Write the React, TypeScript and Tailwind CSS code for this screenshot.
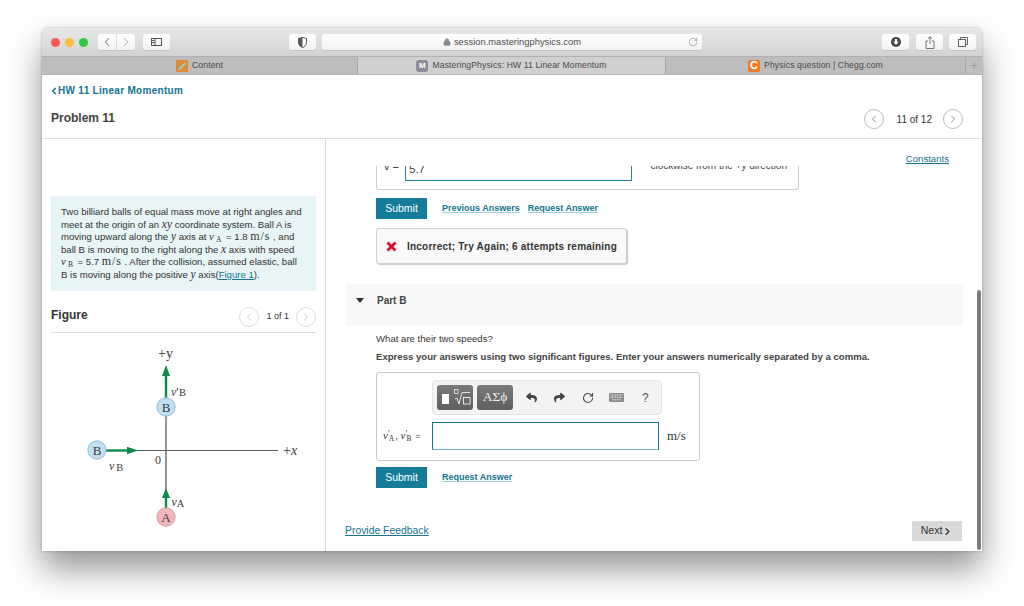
import { ChevronLeft, ChevronRight, Lock, RotateCw } from "lucide-react";
import { FaReply, FaShare } from "react-icons/fa";

const sans = "font-['Liberation_Sans',Arial,sans-serif]";
const serif = "font-['Liberation_Serif','Times_New_Roman',serif]";

function ToolBtn({ children, className }: { children: React.ReactNode; className: string }) {
  return (
    <div className={`h-[16px] flex items-center justify-center rounded-[3px] bg-gradient-to-b from-white to-[#f3f3f3] shadow-[0_1px_0_#c4c4c4] ${className}`}>
      {children}
    </div>
  );
}

function Tab({ className, icon, label }: { className: string; icon?: React.ReactNode; label: string }) {
  return (
    <div className={`h-full flex items-center justify-center gap-[4px] text-[8.6px] tracking-[0.12px] text-[#4a4a4a] border-r border-[#a9a9a9] ${className}`}>
      {icon}
      <span>{label}</span>
    </div>
  );
}

function Round({ dir, faint }: { dir: "l" | "r"; faint?: boolean }) {
  const I = dir === "l" ? ChevronLeft : ChevronRight;
  return (
    <div className={`w-[20px] h-[20px] rounded-full border flex items-center justify-center ${faint ? "border-[#dddddd] text-[#b5b5b5]" : "border-[#bdbdbd] text-[#555555]"}`}>
      <I size={12} strokeWidth={1.3} />
    </div>
  );
}

function V({ sub, prime }: { sub: string; prime?: boolean }) {
  return (
    <span className={`${serif} whitespace-nowrap leading-[0]`}>
      <i className="text-[11px] leading-[0]">v</i>
      {prime ? <span className="text-[9px] align-[3px] leading-[0]">′</span> : null}
      <span className={`text-[7.5px] align-[-2px] leading-[0] ${prime ? "-ml-[1px] mr-[1px]" : "ml-[2px] mr-[2px]"}`}>{sub}</span>
    </span>
  );
}

function Ms() {
  return <span className={`${serif} text-[12px] tracking-[0.9px] leading-[0]`}>m/s</span>;
}

function Figure() {
  const serifFont = "'Liberation Serif', serif";
  return (
    <svg viewBox="51 340 265 210" className="w-[265px] h-[210px] block mt-[7px]" fontFamily={serifFont} fill="#3a3a3a">
      <line x1="166" y1="371" x2="166" y2="510" stroke="#6a6a6a" strokeWidth="1.4" />
      <line x1="96" y1="450.5" x2="278" y2="450.5" stroke="#5f5f5f" strokeWidth="1" />
      <line x1="166" y1="372" x2="166" y2="398" stroke="#0f8a4c" strokeWidth="2.4" />
      <polygon points="166,365 170,376 162,376" fill="#0f8a4c" />
      <line x1="166" y1="494" x2="166" y2="508" stroke="#0f8a4c" strokeWidth="2.4" />
      <polygon points="166,488 170,498 162,498" fill="#0f8a4c" />
      <line x1="104" y1="450.5" x2="130" y2="450.5" stroke="#0f8a4c" strokeWidth="2.4" />
      <polygon points="138,450.5 127,446.8 127,454.2" fill="#0f8a4c" />
      <circle cx="166" cy="407" r="9.2" fill="#bfe0f3" stroke="#8fb4c8" strokeWidth="0.8" />
      <circle cx="97" cy="450" r="9.2" fill="#bfe0f3" stroke="#8fb4c8" strokeWidth="0.8" />
      <circle cx="166" cy="517" r="9.2" fill="#f4b6bd" stroke="#c9969c" strokeWidth="0.8" />
      <text x="166" y="411.5" fontSize="13" textAnchor="middle">B</text>
      <text x="97" y="454.5" fontSize="13" textAnchor="middle">B</text>
      <text x="166" y="521.5" fontSize="13" textAnchor="middle">A</text>
      <text x="165.5" y="358" fontSize="14" textAnchor="middle">+y</text>
      <text x="283" y="454.5" fontSize="14">+<tspan fontStyle="italic">x</tspan></text>
      <text x="155" y="464" fontSize="12">0</text>
      <text x="171" y="396" fontSize="12"><tspan fontStyle="italic">v</tspan>′<tspan fontSize="10.5">B</tspan></text>
      <text x="109" y="470" fontSize="12"><tspan fontStyle="italic">v</tspan><tspan fontSize="10.5" dx="2" dy="1">B</tspan></text>
      <text x="171.5" y="506" fontSize="12"><tspan fontStyle="italic">v</tspan><tspan fontSize="10.5" dy="1">A</tspan></text>
    </svg>
  );
}

export default function App() {
  return (
    <div className={`${sans} w-[1024px] h-[606px] bg-white overflow-hidden pt-[28px] pl-[42px]`}>
      <div className="w-[940px] h-[523px] flex flex-col rounded-t-[5px] overflow-hidden bg-white shadow-[0_18px_34px_rgba(0,0,0,0.42),0_0_3px_rgba(0,0,0,0.25)]">
        {/* toolbar */}
        <div className="h-[28px] shrink-0 flex items-center bg-gradient-to-b from-[#e8e8e8] to-[#d3d3d3] pl-[9px] pr-[6px]">
          <div className="flex gap-[5px] items-center">
            <span className="w-[9px] h-[9px] rounded-full bg-[#fc5753]" />
            <span className="w-[9px] h-[9px] rounded-full bg-[#fdbc40]" />
            <span className="w-[9px] h-[9px] rounded-full bg-[#33c748]" />
          </div>
          <div className="flex ml-[10px] gap-px">
            <ToolBtn className="w-[18px] rounded-r-none"><ChevronLeft size={14} strokeWidth={1.5} className="text-[#555555]" /></ToolBtn>
            <ToolBtn className="w-[18px] rounded-l-none"><ChevronRight size={14} strokeWidth={1.5} className="text-[#9a9a9a]" /></ToolBtn>
          </div>
          <ToolBtn className="w-[27px] ml-[8px]">
            <svg width="12" height="10" viewBox="0 0 12 10" fill="none" stroke="#555555"><rect x="0.5" y="1.5" width="10" height="7" /><line x1="4" y1="1.5" x2="4" y2="8.5" /><line x1="1" y1="3.5" x2="3.5" y2="3.5" /><line x1="1" y1="5.5" x2="3.5" y2="5.5" /></svg>
          </ToolBtn>
          <ToolBtn className="w-[27px] ml-[119px]">
            <svg width="9" height="11" viewBox="0 0 9 11"><path d="M4.5 0.5 L8.5 1.5 V5.5 C8.5 8 6.5 9.8 4.5 10.5 C2.5 9.8 0.5 8 0.5 5.5 V1.5 Z" fill="#fff" stroke="#555555" /><path d="M4.5 0.5 L0.5 1.5 V5.5 C0.5 8 2.5 9.8 4.5 10.5 Z" fill="#555555" /></svg>
          </ToolBtn>
          <ToolBtn className="w-[380px] ml-[6px] relative">
            <span className="flex items-center gap-[3px] text-[9.4px] text-[#4e4e4e]">
              <Lock size={8} fill="#8a8a8a" stroke="#8a8a8a" />
              session.masteringphysics.com
            </span>
            <RotateCw size={10} strokeWidth={1} className="absolute right-[4px] top-[3px] text-[#555555]" />
          </ToolBtn>
          <ToolBtn className="w-[27px] ml-auto">
            <svg width="10" height="10" viewBox="0 0 10 10"><circle cx="5" cy="5" r="5" fill="#444444" /><path d="M3.9 2 H6.1 V4.8 H7.8 L5 7.9 L2.2 4.8 H3.9 Z" fill="#fff" /></svg>
          </ToolBtn>
          <ToolBtn className="w-[27px] ml-[7px]">
            <svg width="10" height="13" viewBox="0 0 10 13" fill="none" stroke="#555555" strokeWidth="0.8"><path d="M3 5 H1 V12.5 H9 V5 H7" /><path d="M5 0.8 V8" /><path d="M3 2.8 L5 0.8 L7 2.8" /></svg>
          </ToolBtn>
          <ToolBtn className="w-[27px] ml-[6px]">
            <svg width="10" height="10" viewBox="0 0 10 10" fill="none" stroke="#555555" strokeWidth="0.9"><rect x="0.5" y="2.5" width="7" height="7" /><path d="M2.5 2.5 V0.5 H9.5 V7.5 H7.5" /></svg>
          </ToolBtn>
        </div>
        {/* tabs */}
        <div className="h-[19px] shrink-0 flex border-y border-[#b0b0b0] bg-[#bebebe]">
          <Tab
            className="w-[316px] bg-[#bdbdbd]"
            icon={
              <svg width="12" height="12" viewBox="0 0 12 12"><rect width="12" height="12" fill="#e08a35" /><path d="M3 9.5 L9.5 3" stroke="#8fd0d8" strokeWidth="2.2" /></svg>
            }
            label="Content"
          />
          <Tab
            className="w-[308px] bg-[#d0d0d0]"
            icon={<span className="w-[12px] h-[12px] rounded-[3px] bg-[#8d8d9a] text-white text-[8px] font-bold flex items-center justify-center">M</span>}
            label="MasteringPhysics: HW 11 Linear Momentum"
          />
          <Tab
            className="w-[300px] bg-[#bdbdbd]"
            icon={<span className="w-[12px] h-[12px] rounded-[2px] bg-[#ee7a2d] text-white text-[11px] font-bold flex items-center justify-center">C</span>}
            label="Physics question | Chegg.com"
          />
          <div className="flex-1 flex items-center justify-center text-[#9c9c9c] text-[13px] font-light">+</div>
        </div>
        {/* header */}
        <div className="h-[64px] shrink-0 border-b border-[#dedede] pl-[9px] pr-[19px] flex flex-col">
          <div className="flex items-center mt-[9px] text-[10px] font-bold text-[#15748f] tracking-[0.3px] leading-[14px]">
            <ChevronLeft size={10} strokeWidth={4} className="-ml-[2px] -mr-[1px]" />
            HW 11 Linear Momentum
          </div>
          <div className="flex items-center justify-between mt-[8px]">
            <span className="text-[12px] font-bold text-[#444444]">Problem 11</span>
            <div className="flex items-center text-[10px] text-[#333333] mt-[3px]">
              <Round dir="l" />
              <span className="ml-[13px] mr-[11px]">11 of 12</span>
              <Round dir="r" />
            </div>
          </div>
        </div>
        {/* body */}
        <div className="flex-1 min-h-0 flex relative">
          <div className="w-[284px] shrink-0 border-r border-[#dedede] pl-[9px] pt-[57px]">
            <div className="w-[265px] h-[95px] bg-[#e8f5f6] px-[10px] pt-[10px] text-[9.6px] leading-[12.6px] text-[#333333]">
              <p className="whitespace-nowrap">Two billiard balls of equal mass move at right angles and</p>
              <p className="whitespace-nowrap">meet at the origin of an <i className={`${serif} text-[11.5px] leading-[0]`}>xy</i> coordinate system. Ball A is</p>
              <p className="whitespace-nowrap">moving upward along the <i className={`${serif} text-[11.5px] leading-[0]`}>y</i> axis at <V sub="A" /> = 1.8 <Ms /> , and</p>
              <p className="whitespace-nowrap">ball B is moving to the right along the <i className={`${serif} text-[11.5px] leading-[0]`}>x</i> axis with speed</p>
              <p className="whitespace-nowrap"><V sub="B" /> = 5.7 <Ms /> . After the collision, assumed elastic, ball</p>
              <p className="whitespace-nowrap">B is moving along the positive <i className={`${serif} text-[11.5px] leading-[0]`}>y</i> axis(<span className="text-[#15748f] underline">Figure 1</span>).</p>
            </div>
            <div className="w-[265px] h-[42px] border-b border-[#dedede] flex items-center justify-between">
              <span className="text-[12px] font-bold text-[#333333] mt-[6px]">Figure</span>
              <div className="flex items-center text-[9px] text-[#333333] mt-[11px]">
                <Round dir="l" faint />
                <span className="mx-[7px]">1 of 1</span>
                <Round dir="r" faint />
              </div>
            </div>
            <Figure />
          </div>
          <div className="flex-1 min-w-0 flex flex-col pl-[20px] pr-[19px]">
            <div className="h-[27px] shrink-0 flex justify-end items-start pr-[14px] pt-[14px]">
              <span className="text-[9.6px] leading-[12px] text-[#15748f] underline">Constants</span>
            </div>
            <div className="h-[24px] shrink-0 overflow-hidden pl-[30px]">
              <div className="w-[423px] h-[24px] border border-t-0 border-[#cfcfcf] rounded-b-[3px] pl-[7px] pr-[11px] flex">
                <span className="w-[21px] text-[11px] leading-[0px] text-[#444444] whitespace-nowrap">v =</span>
                <div className="w-[227px] h-[15px] border-x border-b border-[#2a86a0] text-[11.5px] text-[#444444] leading-[6px] pl-[3px]">5.7</div>
                <span className="ml-auto text-[10px] leading-[0px] text-[#444444] whitespace-nowrap">clockwise from the +y direction</span>
              </div>
            </div>
            <div className="pl-[30px] mt-[8px] flex items-center">
              <div className="w-[51px] h-[21px] bg-[#157c9a] text-white text-[10.5px] flex items-center justify-center">Submit</div>
              <span className="ml-[15px] text-[9px] font-bold text-[#15748f] underline decoration-[#9fcfdd]">Previous Answers</span>
              <span className="ml-[8px] text-[9px] font-bold text-[#15748f] underline decoration-[#9fcfdd]">Request Answer</span>
            </div>
            <div className="ml-[30px] mt-[9px] w-[251px] h-[36px] shrink-0 rounded-[3px] border border-[#cfcfcf] bg-[#f9f9f9] shadow-[1px_1px_1px_#c8c8c8] flex items-center pl-[9px]">
              <svg width="11" height="11" viewBox="0 0 11 11"><path d="M0.5 2.5 L2.5 0.5 L5.5 3.5 L8.5 0.5 L10.5 2.5 L7.5 5.5 L10.5 8.5 L8.5 10.5 L5.5 7.5 L2.5 10.5 L0.5 8.5 L3.5 5.5 Z" fill="#d8102f" /></svg>
              <span className="ml-[10px] text-[10px] font-bold text-[#333333] tracking-[0.22px]">Incorrect; Try Again; 6 attempts remaining</span>
            </div>
            <div className="mt-[20px] h-[42px] shrink-0 bg-[#f8f8f8] flex items-center pl-[10px] pb-[9px]">
              <span className="w-0 h-0 border-x-[4px] border-x-transparent border-t-[5px] border-t-[#333333]" />
              <span className="ml-[13px] text-[10px] font-bold text-[#444444]">Part B</span>
            </div>
            <div className="pl-[30px] mt-[7px] text-[9.6px] leading-[12px] text-[#333333]">What are their two speeds?</div>
            <div className="pl-[30px] mt-[6px] text-[9.6px] leading-[12px] font-bold text-[#444444]">Express your answers using two significant figures. Enter your answers numerically separated by a comma.</div>
            <div className="ml-[30px] mt-[9px] w-[324px] h-[89px] shrink-0 border border-[#c9c9c9] rounded-[3px] flex flex-col pl-[55px]">
              <div className="mt-[7px] w-[230px] h-[35px] bg-[#f3f3f3] border border-[#e4e4e4] rounded-[4px] flex items-center pl-[4px] text-[#444444]">
                <div className="w-[36px] h-[25px] rounded-[3px] bg-gradient-to-b from-[#7a7a7a] to-[#5f5f5f]">
                  <svg width="36" height="25" viewBox="0 0 36 25" fill="none" stroke="#fff"><rect x="5" y="9" width="7" height="10" fill="#fff" stroke="none" /><rect x="17.5" y="4.5" width="3.5" height="4" strokeWidth="0.7" /><path d="M18 14 L20 13 L22 19 L25 7.5 H33" strokeWidth="0.8" /><rect x="26.5" y="12.5" width="6.5" height="6.5" strokeWidth="0.8" /></svg>
                </div>
                <div className={`ml-[4px] w-[36px] h-[25px] rounded-[3px] bg-gradient-to-b from-[#7a7a7a] to-[#5f5f5f] text-[#eeeeee] text-[13.5px] flex items-center justify-center ${serif}`}>ΑΣϕ</div>
                <FaReply size={11} className="ml-[13px]" />
                <FaShare size={11} className="ml-[17px]" />
                <RotateCw size={12} strokeWidth={2.2} className="ml-[17px]" />
                <svg width="15" height="9" viewBox="0 0 15 9" className="ml-[15px]"><rect width="15" height="9" rx="1" fill="#8a8a8a" /><path d="M1.5 2 H13.5 M1.5 4.2 H13.5 M3 6.8 H12" stroke="#eeeeee" strokeWidth="1" strokeDasharray="1 0.6" /></svg>
                <span className="ml-[18px] text-[12px] text-[#555555]">?</span>
              </div>
              <div className="flex items-center mt-[7px] relative">
                <span className="absolute -left-[49px] text-[10px] text-[#333333] whitespace-nowrap"><V sub="A" prime /><span className={serif}>,</span> <V sub="B" prime /> <span className="text-[9px]">=</span></span>
                <div className="w-[227px] h-[28px] border border-[#15748f] border-b-[#6fb3c6]" />
                <span className={`ml-[8px] text-[13px] text-[#333333] ${serif}`}>m/s</span>
              </div>
            </div>
            <div className="pl-[30px] mt-[6px] flex items-center">
              <div className="w-[51px] h-[21px] bg-[#157c9a] text-white text-[10.5px] flex items-center justify-center">Submit</div>
              <span className="ml-[15px] text-[9px] font-bold text-[#15748f] underline decoration-[#9fcfdd]">Request Answer</span>
            </div>
            <div className="mt-auto mb-[10px] flex items-center justify-between pr-[1px]">
              <span className="text-[10.4px] text-[#15748f] underline -ml-px">Provide Feedback</span>
              <div className="w-[50px] h-[20px] bg-[#d9d9d9] text-[10.5px] text-[#333333] flex items-center justify-center">Next<ChevronRight size={11} strokeWidth={3.5} className="text-[#444444]" /></div>
            </div>
          </div>
          <div className="absolute right-[1px] top-[151px] bottom-[1px] w-[4px] rounded-full bg-[#7c7c7c]" />
        </div>
      </div>
    </div>
  );
}
